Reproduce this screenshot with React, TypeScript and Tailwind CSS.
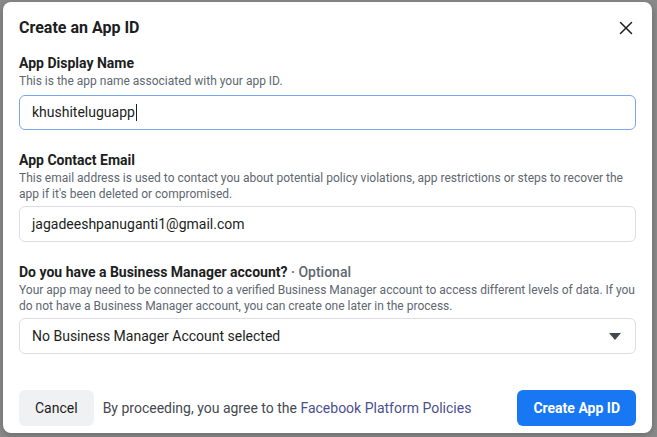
import * as React from 'react';

function CloseIcon() {
  return (
    <svg width="14" height="14" viewBox="0 0 14 14" fill="none" stroke="#1c1e21" strokeWidth="1.5" strokeLinecap="round">
      <path d="M1.5 1.5 12.5 12.5M12.5 1.5 1.5 12.5" />
    </svg>
  );
}

function Field({ label, hint, children }: { label: React.ReactNode; hint: React.ReactNode; children: React.ReactNode }) {
  return (
    <div className="flex flex-col">
      <div className="text-[14px] font-bold leading-[18px] text-[#1c1e21]">{label}</div>
      <div className="mt-[1px] text-[12px] leading-[16px] text-[#606770]">{hint}</div>
      {children}
    </div>
  );
}

export default function App() {
  return (
    <div className="h-[437px] w-[657px] overflow-hidden bg-[#8b8b8b] pl-[3px] pt-[2px] font-['Roboto','Liberation_Sans',sans-serif]">
      <div className="flex h-[431px] w-[649px] flex-col rounded-[8px] bg-white px-4 shadow-[0_2px_8px_rgba(0,0,0,0.25)]">
        <div className="flex h-[52px] items-center justify-between">
          <div className="text-[16px] font-bold text-[#1c1e21]">Create an App ID</div>
          <button type="button" className="flex h-5 w-5 items-center justify-center">
            <CloseIcon />
          </button>
        </div>

        <div className="flex flex-col gap-[21px]">
          <Field label="App Display Name" hint="This is the app name associated with your app ID.">
            <div className="mt-[6px] flex h-[35px] items-center rounded-[6px] border border-[#7aa7ec] px-3 text-[14px] text-[#1c1e21]">
              khushiteluguapp
              <span className="ml-[1px] inline-block h-[17px] w-[1px] bg-[#1c1e21]" />
            </div>
          </Field>

          <Field
            label="App Contact Email"
            hint="This email address is used to contact you about potential policy violations, app restrictions or steps to recover the app if it's been deleted or compromised."
          >
            <div className="mt-[4px] flex h-[36px] items-center rounded-[6px] border border-[#dadde1] px-3 text-[14px] text-[#1c1e21]">
              jagadeeshpanuganti1@gmail.com
            </div>
          </Field>

          <Field
            label={
              <span>
                Do you have a Business Manager account? <span className="font-medium text-[#606770]">· Optional</span>
              </span>
            }
            hint="Your app may need to be connected to a verified Business Manager account to access different levels of data. If you do not have a Business Manager account, you can create one later in the process."
          >
            <div className="mt-[4px] flex h-[36px] items-center justify-between rounded-[6px] border border-[#dadde1] pl-3 pr-[14px] text-[14px] text-[#1c1e21]">
              <span>No Business Manager Account selected</span>
              <svg width="12" height="7" viewBox="0 0 12 7">
                <path d="M0 0h12L6 7z" fill="#444950" />
              </svg>
            </div>
          </Field>
        </div>

        <div className="mt-[36px] flex items-center justify-between">
          <div className="flex items-center gap-[9px]">
            <button type="button" className="h-[36px] rounded-[6px] bg-[#f0f1f3] px-4 text-[14px] text-[#1c1e21]">
              Cancel
            </button>
            <span className="text-[14px] text-[#444950]">
              By proceeding, you agree to the <span className="text-[#4b4f8e]">Facebook Platform Policies</span>
            </span>
          </div>
          <button type="button" className="h-[36px] rounded-[6px] bg-[#1877f2] px-4 text-[14px] font-bold text-white">
            Create App ID
          </button>
        </div>
      </div>
    </div>
  );
}
